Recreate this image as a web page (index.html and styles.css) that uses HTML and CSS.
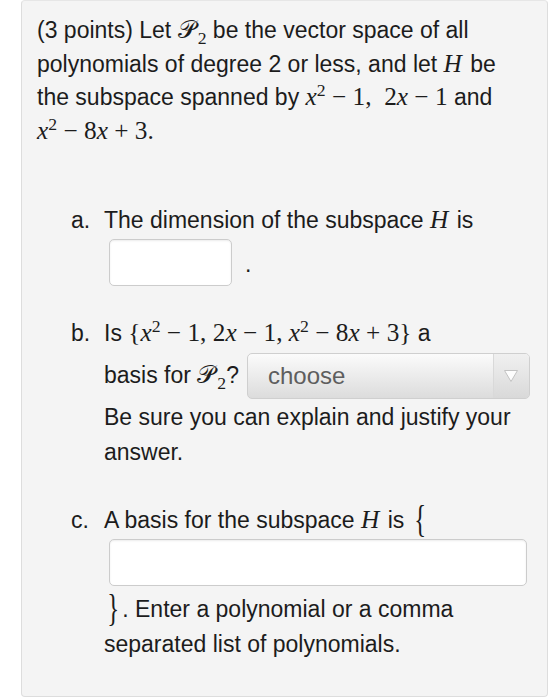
FILE: index.html
```html
<!DOCTYPE html>
<html>
<head>
<meta charset="utf-8">
<link rel="stylesheet" href="styles.css">
</head>
<body>
<div class="problem">
  <p class="intro">(3 points) Let <span class="m"><span class="cal">𝒫</span><sub>2</sub></span> be the vector space of all polynomials of degree 2 or less, and let <span class="m"><i class="h">H</i></span> be the subspace spanned by <span class="m"><i>x</i><sup>2</sup> − 1, &nbsp;2<i>x</i> − 1</span> and <span class="m"><i>x</i><sup>2</sup> − 8<i>x</i> + 3.</span></p>

  <ol class="parts">
    <li class="part">
      <span class="marker">a.</span>
      <div class="body">
        <div class="line">The dimension of the subspace <span class="m"><i class="h">H</i></span> is</div>
        <div class="answer-row"><span class="field field-small"></span><span class="dot">.</span></div>
      </div>
    </li>
    <li class="part">
      <span class="marker">b.</span>
      <div class="body">
        <div class="line">Is <span class="m">{<i>x</i><sup>2</sup> − 1, 2<i>x</i> − 1, <i>x</i><sup>2</sup> − 8<i>x</i> + 3}</span> a</div>
        <div class="select-row"><span>basis for <span class="m"><span class="cal">𝒫</span><sub>2</sub></span>?</span><span class="select"><span class="select-text">choose</span><span class="select-arrow"><svg width="16" height="14" viewBox="0 0 16 14"><path d="M1.5 1.5 H14.5 L8 12.5 Z" fill="#fdfdfd" stroke="#c2c2c2" stroke-width="1"/></svg></span></span></div>
        <div class="line">Be sure you can explain and justify your</div>
        <div class="line">answer.</div>
      </div>
    </li>
    <li class="part part-c">
      <span class="marker">c.</span>
      <div class="body">
        <div class="line">A basis for the subspace <span class="m"><i class="h">H</i></span> is <span class="brace">{</span></div>
        <div class="answer-row answer-wide"><span class="field field-wide"></span></div>
        <div class="line"><span class="brace brace-close">}</span>. Enter a polynomial or a comma</div>
        <div class="line">separated list of polynomials.</div>
      </div>
    </li>
  </ol>
</div>
</body>
</html>
```

FILE: styles.css
```css
html, body {
  margin: 0;
  padding: 0;
  background: #ffffff;
}

body {
  font-family: "Liberation Sans", Arial, Helvetica, sans-serif;
  font-size: 23px;
  color: #1c1c1c;
}

.problem {
  margin-left: 21px;
  width: 527px;
  height: 697px;
  box-sizing: border-box;
  background: #f4f4f4;
  border: 1px solid #dddddd;
  border-top-color: #e6e6e6;
  border-radius: 4px;
  padding: 13px 20px 0 15px;
}

.intro {
  margin: 0;
  line-height: 33.5px;
}

.m {
  font-family: "Liberation Serif", "DejaVu Serif", serif;
  font-size: 1.1em;
  line-height: 1;
  white-space: nowrap;
}

.m i {
  font-style: italic;
}

.m .h {
  margin-right: 0.08em;
}

.m sup, .m sub {
  font-size: 0.7em;
  line-height: 0;
}

.m sub {
  margin-left: 2px;
}

.cal {
  font-family: "DejaVu Serif", "Liberation Serif", serif;
  font-style: normal;
}

.parts {
  list-style: none;
  margin: 55px 0 0 34px;
  padding: 0;
}

.part {
  display: flex;
  line-height: 35px;
}

.part + .part {
  margin-top: 29px;
}

.part-c {
  margin-top: 33px !important;
}

.marker {
  width: 33px;
  flex: none;
}

.body {
  flex: 1;
}

.answer-row {
  display: flex;
  align-items: flex-start;
  padding-top: 1px;
  height: 49px;
  box-sizing: border-box;
}

.answer-wide {
  padding-top: 1px;
  height: 54px;
}

.field {
  display: block;
  box-sizing: border-box;
  height: 47px;
  margin-left: 5px;
  background: #ffffff;
  border: 1px solid #cccccc;
  border-radius: 5px;
  box-shadow: inset 0 1px 2px rgba(0,0,0,0.08);
}

.field-small {
  width: 123px;
}

.field-wide {
  width: 418px;
}

.dot {
  margin-left: 13px;
  line-height: 50px;
}

.select-row {
  display: flex;
  align-items: center;
  height: 49px;
  white-space: nowrap;
}

.select {
  display: flex;
  box-sizing: border-box;
  margin-left: 8px;
  margin-top: 1px;
  width: 283px;
  height: 46px;
  border: 1px solid #cfcfcf;
  border-radius: 5px;
  background: linear-gradient(#fbfbfb, #dcdcdc);
  overflow: hidden;
}

.select-text {
  flex: 1;
  padding-left: 20px;
  color: #5e5e5e;
  font-size: 24px;
  line-height: 44px;
}

.select-arrow {
  width: 35px;
  flex: none;
  display: flex;
  align-items: center;
  justify-content: center;
  border-left: 1px solid #d9d9d9;
  background: linear-gradient(#f0f0f0, #d9d9d9);
}

.brace {
  font-family: "Liberation Serif", "DejaVu Serif", serif;
  font-size: 38px;
  line-height: 0;
  display: inline-block;
  transform: scaleX(0.65);
  vertical-align: -4px;
}
```
